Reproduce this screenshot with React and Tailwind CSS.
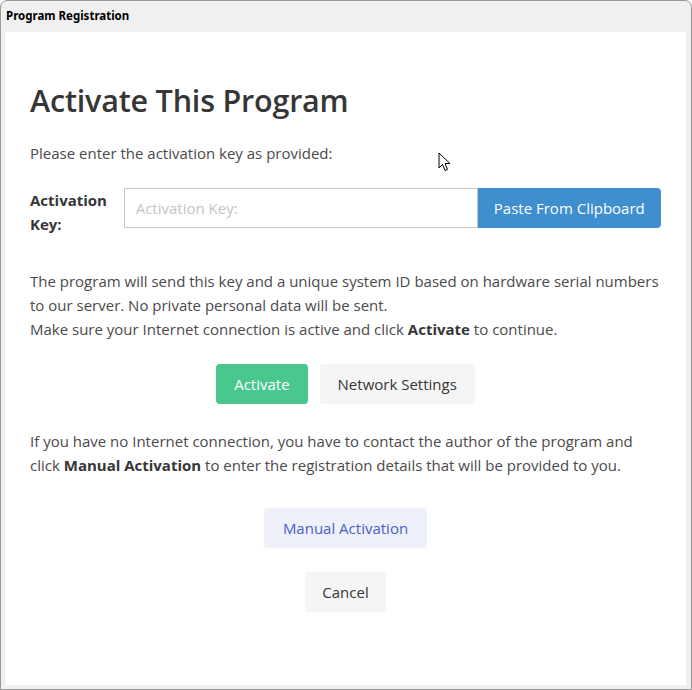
import React from 'react';

const Cursor = () => (
  <svg width="14" height="21" viewBox="0 0 14 21" className="absolute left-[437px] top-[151px]">
    <path d="M1 1 L1 16 L4.5 12.5 L7 18.5 L9.5 17.5 L7 11.5 L12 11.5 Z" fill="white" stroke="black" strokeWidth="1" strokeLinejoin="miter" />
  </svg>
);

const App = () => {
  const [key, setKey] = React.useState('');

  return (
    <div className="relative w-[692px] h-[690px] bg-[#f0f0f0] border border-[#9a9a9a] rounded-t-[7px] flex flex-col font-['Open_Sans',sans-serif] text-[#4a4a4a] overflow-hidden">
      {/* Title bar */}
      <div className="h-[31px] shrink-0 flex items-center pl-[5px] pb-[1px] text-[11.5px] font-bold text-black font-['Noto_Sans',sans-serif]">
        Program Registration
      </div>

      {/* Content */}
      <div className="flex-1 ml-[4px] mr-[5px] mb-[4px] bg-white px-[25px] pt-[48px] text-[15px] leading-[24px]">
        <h1 className="text-[30.5px] leading-[40px] font-semibold text-[#363636] tracking-[-0.2px]">Activate This Program</h1>

        <p className="mt-[21px]">Please enter the activation key as provided:</p>

        <div className="mt-[23px] flex items-start">
          <label className="w-[94px] font-bold text-[#363636] leading-[24px]">Activation Key:</label>
          <input
            value={key}
            onChange={(e) => setKey(e.target.value)}
            placeholder="Activation Key:"
            className="w-[355px] h-[40px] border border-[#c8c8c8] px-[11px] text-[15px] placeholder:text-[#c4c4c4] outline-none"
          />
          <button className="w-[184px] h-[40px] bg-[#3e8ed0] text-white rounded-r-[4px] text-[15px]">
            Paste From Clipboard
          </button>
        </div>

        <p className="mt-[33px]">
          The program will send this key and a unique system ID based on hardware serial numbers
          <br />
          to our server. No private personal data will be sent.
          <br />
          Make sure your Internet connection is active and click <b className="text-[#363636]">Activate</b> to continue.
        </p>

        <div className="mt-[23px] flex justify-center gap-[12px]">
          <button className="h-[40px] px-[18px] bg-[#48c78e] text-white rounded-[4px]">Activate</button>
          <button className="h-[40px] px-[18px] bg-[#f5f5f5] text-[#363636] rounded-[4px]">Network Settings</button>
        </div>

        <p className="mt-[25px]">
          If you have no Internet connection, you have to contact the author of the program and
          <br />
          click <b className="text-[#363636]">Manual Activation</b> to enter the registration details that will be provided to you.
        </p>

        <div className="mt-[31px] flex justify-center">
          <button className="h-[40px] px-[19px] bg-[#eff1fa] text-[#485fc7] rounded-[4px]">Manual Activation</button>
        </div>

        <div className="mt-[24px] flex justify-center">
          <button className="h-[40px] px-[17px] bg-[#f5f5f5] text-[#363636] rounded-[4px]">Cancel</button>
        </div>
      </div>

      <Cursor />
    </div>
  );
};

export default App;
